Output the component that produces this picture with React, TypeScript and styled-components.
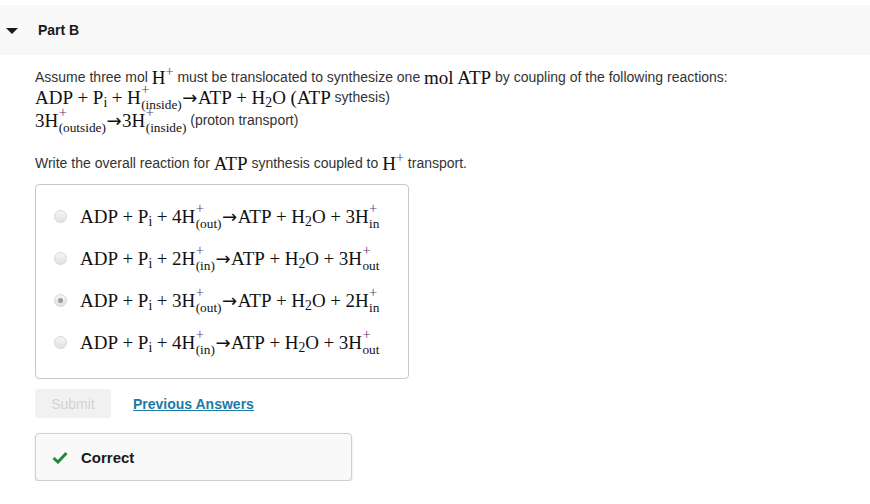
import React from "react";
import styled, { createGlobalStyle } from "styled-components";

const Global = createGlobalStyle`
  html, body { margin: 0; padding: 0; background: #fff; }
  body { font-family: "Liberation Sans", Arial, sans-serif; color: #333; }
`;

const Page = styled.div`
  width: 870px;
  padding-top: 5px;
`;

const Header = styled.div`
  display: flex;
  align-items: center;
  height: 50px;
  background: #f8f8f8;
  padding-left: 6px;
  gap: 20px;
`;

const Caret = styled.span`
  width: 0;
  height: 0;
  border-left: 6px solid transparent;
  border-right: 6px solid transparent;
  border-top: 6px solid #1a1a1a;
  margin-top: 1px;
`;

const Title = styled.span`
  font-weight: bold;
  font-size: 14px;
  color: #1a1a1a;
`;

const Body = styled.div`
  padding: 12px 0 0 35px;
`;

const Para = styled.div`
  font-size: 14px;
  color: #333;
`;

const Line = styled.div<{ $h?: number }>`
  font-size: 14px;
  height: ${(p) => p.$h ?? 25}px;
  display: flex;
  align-items: center;
  white-space: nowrap;
`;

const M = styled.span<{ $size?: number }>`
  font-family: "Liberation Serif", "DejaVu Serif", serif;
  font-size: ${(p) => p.$size ?? 19}px;
  color: #111;
  white-space: nowrap;
  line-height: 1;
`;

const Op = styled.span`
  margin: 0 0.24em;
`;

const Arrow = styled.span`
  font-family: "DejaVu Sans", sans-serif;
  font-size: 0.95em;
  margin: 0 0.03em;
`;

const Stack = styled.span`
  display: inline-flex;
  flex-direction: column;
  font-size: 0.7em;
  line-height: 1.15;
  vertical-align: 0.75em;
  margin-left: 0.03em;
`;

const Plus = styled.span`
  color: #5a3c7a;
  font-size: 1.1em;
  line-height: 1.05;
`;

const Sup = styled.sup`
  font-size: 0.75em;
  line-height: 0;
  vertical-align: 0.55em;
  color: #5a3c7a;
`;

const Sub = styled.sub`
  font-size: 0.72em;
  line-height: 0;
  vertical-align: -0.22em;
`;

const HS: React.FC<{ sub: string }> = ({ sub }) => (
  <>
    H
    <Stack>
      <Plus>+</Plus>
      <span>{sub}</span>
    </Stack>
  </>
);

const Question = styled.div`
  font-size: 14px;
  margin-top: 19px;
  height: 22px;
  display: flex;
  align-items: center;
`;

const Choices = styled.div`
  margin-top: 10px;
  width: 374px;
  height: 195px;
  border: 1px solid #c8c8c8;
  border-radius: 4px;
  padding-top: 10px;
  box-sizing: border-box;
`;

const Choice = styled.label`
  display: flex;
  align-items: center;
  height: 42px;
  padding-left: 18px;
  gap: 13px;
`;

const Radio = styled.span<{ $checked?: boolean }>`
  width: 11px;
  height: 11px;
  border-radius: 50%;
  border: 1px solid #d6d6d6;
  background: linear-gradient(#f4f4f4, #e2e2e2);
  display: flex;
  align-items: center;
  justify-content: center;
  flex-shrink: 0;
  &::after {
    content: "";
    width: 5px;
    height: 5px;
    border-radius: 50%;
    background: ${(p) => (p.$checked ? "#9a9a9a" : "transparent")};
  }
`;

const Actions = styled.div`
  display: flex;
  align-items: center;
  margin-top: 10px;
  gap: 22px;
`;

const SubmitBtn = styled.button`
  width: 76px;
  height: 29px;
  border: none;
  border-radius: 3px;
  background: #f1f1f1;
  color: #d2d2d2;
  font-family: "Liberation Sans", Arial, sans-serif;
  font-size: 14px;
  padding: 0;
`;

const Link = styled.a`
  color: #1e7aa6;
  font-weight: bold;
  font-size: 14px;
  text-decoration: underline;
`;

const Feedback = styled.div`
  margin-top: 15px;
  width: 317px;
  height: 48px;
  box-sizing: border-box;
  border: 1px solid #cfcfcf;
  border-radius: 4px;
  background: #f9f9f9;
  box-shadow: 0 1px 2px rgba(0, 0, 0, 0.15);
  display: flex;
  align-items: center;
  padding-left: 16px;
  gap: 13px;
`;

const FeedbackText = styled.span`
  font-weight: bold;
  font-size: 15px;
  color: #1a1a1a;
`;

const Check = () => (
  <svg width="16" height="13" viewBox="0 0 16 13">
    <path d="M1.5 7 L6 11 L14.5 2" fill="none" stroke="#1f8a3c" strokeWidth="3" />
  </svg>
);

type Opt = { a: string; s1: string; b: string; s2: string };
const opts: Opt[] = [
  { a: "4", s1: "(out)", b: "3", s2: "in" },
  { a: "2", s1: "(in)", b: "3", s2: "out" },
  { a: "3", s1: "(out)", b: "2", s2: "in" },
  { a: "4", s1: "(in)", b: "3", s2: "out" },
];

export default function App() {
  return (
    <Page>
      <Global />
      <Header>
        <Caret />
        <Title>Part B</Title>
      </Header>
      <Body>
        <Para>
          <Line $h={20}>
            Assume three mol&nbsp;<M>H<Sup>+</Sup></M>&nbsp;must be translocated to synthesize one&nbsp;
            <M>mol ATP</M>&nbsp;by coupling of the following reactions:
          </Line>
          <Line $h={20}>
            <M>
              ADP<Op>+</Op>P<Sub>i</Sub><Op>+</Op>
              <HS sub="(inside)" />
              <Arrow>→</Arrow>ATP<Op>+</Op>H<Sub>2</Sub>O (ATP
            </M>
            &nbsp;sythesis)
          </Line>
          <Line $h={26}>
            <M>
              3<HS sub="(outside)" />
              <Arrow>→</Arrow>3<HS sub="(inside)" />
            </M>
            &nbsp;(proton transport)
          </Line>
        </Para>
        <Question>
          Write the overall reaction for&nbsp;<M>ATP</M>&nbsp;synthesis coupled to&nbsp;
          <M>H<Sup>+</Sup></M>&nbsp;transport.
        </Question>
        <Choices>
          {opts.map((o, i) => (
            <Choice key={i}>
              <Radio $checked={i === 2} />
              <M $size={19}>
                ADP<Op>+</Op>P<Sub>i</Sub><Op>+</Op>
                {o.a}
                <HS sub={o.s1} />
                <Arrow>→</Arrow>ATP<Op>+</Op>H<Sub>2</Sub>O<Op>+</Op>
                {o.b}
                <HS sub={o.s2} />
              </M>
            </Choice>
          ))}
        </Choices>
        <Actions>
          <SubmitBtn disabled>Submit</SubmitBtn>
          <Link href="#">Previous Answers</Link>
        </Actions>
        <Feedback>
          <Check />
          <FeedbackText>Correct</FeedbackText>
        </Feedback>
      </Body>
    </Page>
  );
}
